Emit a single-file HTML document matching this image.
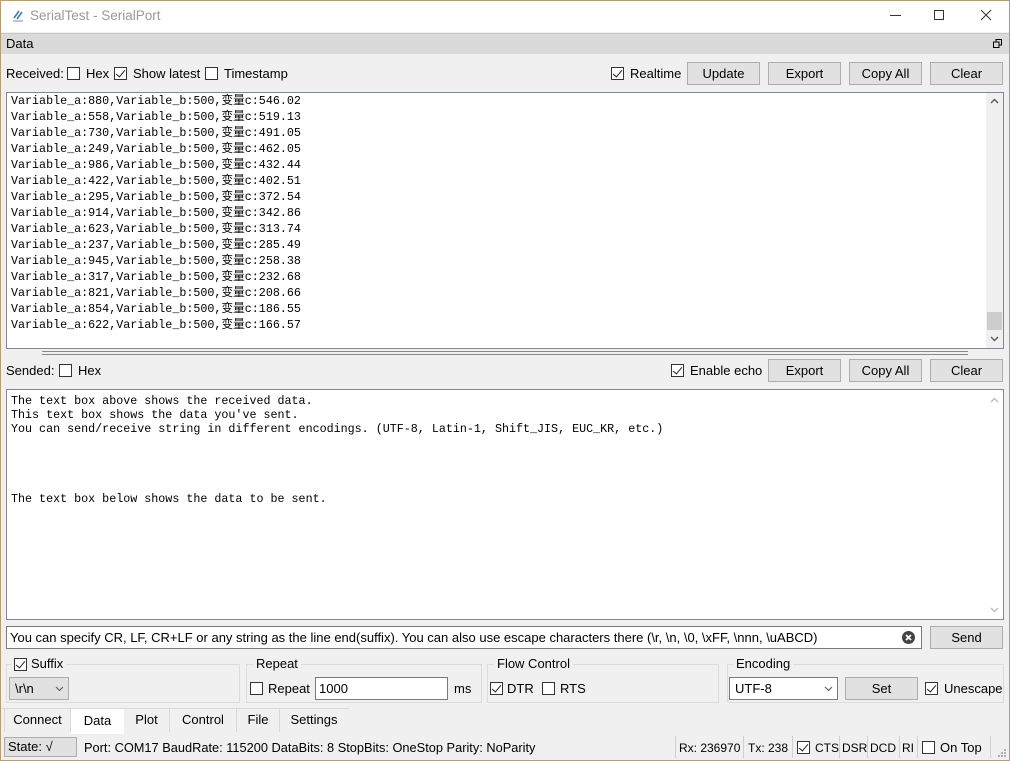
<!DOCTYPE html>
<html><head><meta charset="utf-8"><style>
*{box-sizing:border-box;margin:0;padding:0}
body{width:1010px;height:761px;overflow:hidden;background:#f0f0f0;font-family:"Liberation Sans","Noto Sans CJK SC",sans-serif;font-size:13px;color:#000;position:relative}
.a{position:absolute;white-space:nowrap}
.btn{position:absolute;height:23px;background:#e1e1e1;border:1px solid #adadad;text-align:center;line-height:21px}
.cb{position:absolute;width:13px;height:13px;border:1px solid #333;background:#fff}
.cb.c::after{content:"";position:absolute;left:3px;top:0px;width:4px;height:8px;border-right:1.3px solid #222;border-bottom:1.3px solid #222;transform:rotate(40deg)}
.box{position:absolute;background:#fff;border:1px solid #828790}
.mono{font-family:"Liberation Mono","Noto Sans CJK SC",monospace;font-size:11.7px;line-height:16px}
.grp{position:absolute;border:1px solid #dcdcdc;}
.gt{position:absolute;background:#f0f0f0;padding:0 3px}
.combo{position:absolute;border:1px solid #adadad;height:23px;line-height:21px;padding-left:5px}
.s{font-size:12px}
</style></head><body>
<div class="a" style="left:0;top:0;width:1010px;height:761px;border:1px solid #b59e73;z-index:9;pointer-events:none"></div>
<!-- title -->
<div class="a" style="left:0;top:0;width:1010px;height:32px;background:#fff"></div>
<svg class="a" style="left:11px;top:8px" width="14" height="14" viewBox="0 0 14 14"><path d="M3 10 L8 3 M6 11 L11 4" stroke="#3a7fc4" stroke-width="1.6" fill="none"/><path d="M2 13h10" stroke="#888" stroke-width="1"/></svg>
<div class="a" style="left:30px;top:8px;color:#999;font-size:13.5px">SerialTest - SerialPort</div>
<div class="a" style="left:890px;top:15px;width:11px;height:1px;background:#333"></div>
<div class="a" style="left:934px;top:10px;width:10px;height:10px;border:1px solid #333"></div>
<svg class="a" style="left:980px;top:9px" width="12" height="12"><path d="M1 1L11 11M11 1L1 11" stroke="#333" stroke-width="1"/></svg>
<!-- dock header -->
<div class="a" style="left:1px;top:33px;width:1008px;height:21px;background:#dadada;border-top:1px solid #c8c8c8"></div>
<div class="a" style="left:6px;top:36px">Data</div>
<svg class="a" style="left:993px;top:39px" width="9" height="9"><rect x="0.5" y="3" width="5.5" height="5.5" fill="none" stroke="#000"/><path d="M3 3V0.5H8.5V6H6" fill="none" stroke="#000"/></svg>
<!-- received row -->
<div class="a" style="left:6px;top:66px">Received:</div>
<div class="cb" style="left:67px;top:67px"></div><div class="a" style="left:86px;top:66px">Hex</div>
<div class="cb c" style="left:114px;top:67px"></div><div class="a" style="left:133px;top:66px">Show latest</div>
<div class="cb" style="left:205px;top:67px"></div><div class="a" style="left:224px;top:66px">Timestamp</div>
<div class="cb c" style="left:611px;top:67px"></div><div class="a" style="left:630px;top:66px">Realtime</div>
<div class="btn" style="left:687px;top:62px;width:73px">Update</div>
<div class="btn" style="left:768px;top:62px;width:73px">Export</div>
<div class="btn" style="left:849px;top:62px;width:73px">Copy All</div>
<div class="btn" style="left:930px;top:62px;width:73px">Clear</div>
<div class="box mono" style="left:6px;top:92px;width:998px;height:257px;padding:0 0 0 4px">
<div style="position:absolute;left:4px;top:0">Variable_a:880,Variable_b:500,变量c:546.02<br>Variable_a:558,Variable_b:500,变量c:519.13<br>Variable_a:730,Variable_b:500,变量c:491.05<br>Variable_a:249,Variable_b:500,变量c:462.05<br>Variable_a:986,Variable_b:500,变量c:432.44<br>Variable_a:422,Variable_b:500,变量c:402.51<br>Variable_a:295,Variable_b:500,变量c:372.54<br>Variable_a:914,Variable_b:500,变量c:342.86<br>Variable_a:623,Variable_b:500,变量c:313.74<br>Variable_a:237,Variable_b:500,变量c:285.49<br>Variable_a:945,Variable_b:500,变量c:258.38<br>Variable_a:317,Variable_b:500,变量c:232.68<br>Variable_a:821,Variable_b:500,变量c:208.66<br>Variable_a:854,Variable_b:500,变量c:186.55<br>Variable_a:622,Variable_b:500,变量c:166.57</div>
<div style="position:absolute;right:0;top:0;width:17px;height:255px;background:#f0f0f0"></div>
<div style="position:absolute;right:1px;top:219px;width:15px;height:18px;background:#cdcdcd"></div>
<svg style="position:absolute;right:4px;top:5px" width="9" height="6"><path d="M1 5L4.5 1.5L8 5" stroke="#606060" stroke-width="1.5" fill="none"/></svg>
<svg style="position:absolute;right:4px;top:243px" width="9" height="6"><path d="M1 1L4.5 4.5L8 1" stroke="#606060" stroke-width="1.5" fill="none"/></svg>
</div>
<div class="a" style="left:42px;top:351px;width:926px;height:4px;border-top:1px solid #888;border-bottom:1px solid #888"></div>
<!-- sended row -->
<div class="a" style="left:6px;top:363px">Sended:</div>
<div class="cb" style="left:59px;top:364px"></div><div class="a" style="left:78px;top:363px">Hex</div>
<div class="cb c" style="left:671px;top:364px"></div><div class="a" style="left:690px;top:363px">Enable echo</div>
<div class="btn" style="left:768px;top:359px;width:73px">Export</div>
<div class="btn" style="left:849px;top:359px;width:73px">Copy All</div>
<div class="btn" style="left:930px;top:359px;width:73px">Clear</div>
<div class="box mono" style="left:6px;top:389px;width:998px;height:231px">
<div style="position:absolute;left:4px;top:4px;line-height:14px">The text box above shows the received data.<br>This text box shows the data you've sent.<br>You can send/receive string in different encodings. (UTF-8, Latin-1, Shift_JIS, EUC_KR, etc.)<br><br><br><br><br>The text box below shows the data to be sent.</div>
<svg style="position:absolute;right:4px;top:7px" width="9" height="6"><path d="M1 5L4.5 1.5L8 5" stroke="#c0c0c0" stroke-width="1.5" fill="none"/></svg>
<svg style="position:absolute;right:4px;top:217px" width="9" height="6"><path d="M1 1L4.5 4.5L8 1" stroke="#c0c0c0" stroke-width="1.5" fill="none"/></svg>
</div>
<!-- input -->
<div class="box" style="left:6px;top:626px;width:916px;height:23px;border-color:#7a7a7a"><div class="a" style="left:3px;top:3px">You can specify CR, LF, CR+LF or any string as the line end(suffix). You can also use escape characters there (\r, \n, \0, \xFF, \nnn, \uABCD)</div>
<svg style="position:absolute;left:895px;top:4px" width="13" height="13"><circle cx="6.5" cy="6.5" r="6.5" fill="#444"/><path d="M4 4L9 9M9 4L4 9" stroke="#fff" stroke-width="1.8"/></svg></div>
<div class="btn" style="left:930px;top:626px;width:73px">Send</div>
<!-- groups -->
<div class="grp" style="left:6px;top:664px;width:234px;height:39px"></div>
<div class="gt" style="left:11px;top:656px;padding-left:20px">Suffix</div>
<div class="cb c" style="left:14px;top:658px"></div>
<div class="combo" style="left:9px;top:677px;width:60px;background:#e1e1e1">\r\n</div>
<svg class="a" style="left:55px;top:686px" width="9" height="6"><path d="M1 1L4.5 4.5L8 1" stroke="#555" fill="none"/></svg>
<div class="grp" style="left:246px;top:664px;width:236px;height:39px"></div>
<div class="gt" style="left:253px;top:656px">Repeat</div>
<div class="cb" style="left:250px;top:682px"></div><div class="a" style="left:268px;top:681px">Repeat</div>
<div class="box" style="left:315px;top:677px;width:133px;height:23px;border-color:#7a7a7a"><div class="a" style="left:3px;top:3px">1000</div></div>
<div class="a" style="left:454px;top:681px">ms</div>
<div class="grp" style="left:487px;top:664px;width:232px;height:39px"></div>
<div class="gt" style="left:494px;top:656px">Flow Control</div>
<div class="cb c" style="left:490px;top:682px"></div><div class="a" style="left:507px;top:681px">DTR</div>
<div class="cb" style="left:542px;top:682px"></div><div class="a" style="left:560px;top:681px">RTS</div>
<div class="grp" style="left:727px;top:664px;width:277px;height:39px"></div>
<div class="gt" style="left:733px;top:656px">Encoding</div>
<div class="combo" style="left:729px;top:677px;width:109px;background:#fff;border-color:#7a7a7a">UTF-8</div>
<svg class="a" style="left:824px;top:686px" width="9" height="6"><path d="M1 1L4.5 4.5L8 1" stroke="#555" fill="none"/></svg>
<div class="btn" style="left:845px;top:677px;width:73px">Set</div>
<div class="cb c" style="left:925px;top:682px"></div><div class="a" style="left:944px;top:681px">Unescape</div>
<!-- tabs -->
<div class="a" style="left:1px;top:708px;width:348px;height:1px;background:#d9d9d9"></div>
<div class="a" style="left:4px;top:709px;width:67px;height:23px;border-right:1px solid #d9d9d9;border-left:1px solid #d9d9d9;text-align:center;line-height:22px">Connect</div>
<div class="a" style="left:71px;top:709px;width:53px;height:25px;background:#fff;text-align:center;line-height:24px">Data</div>
<div class="a" style="left:124px;top:709px;width:46px;height:23px;border-right:1px solid #d9d9d9;text-align:center;line-height:22px">Plot</div>
<div class="a" style="left:170px;top:709px;width:67px;height:23px;border-right:1px solid #d9d9d9;text-align:center;line-height:22px">Control</div>
<div class="a" style="left:237px;top:709px;width:43px;height:23px;border-right:1px solid #d9d9d9;text-align:center;line-height:22px">File</div>
<div class="a" style="left:280px;top:709px;width:68px;height:23px;text-align:center;line-height:22px">Settings</div>
<!-- status -->
<div class="a" style="left:4px;top:737px;width:73px;height:20px;background:#e1e1e1;border:1px solid #adadad;padding-left:3px;line-height:18px">State: √</div>
<div class="a" style="left:84px;top:740px;font-size:12.8px">Port: COM17 BaudRate: 115200 DataBits: 8 StopBits: OneStop Parity: NoParity</div>
<div class="a" style="left:675px;top:736px;width:1px;height:22px;background:#d0d0d0"></div>
<div class="a s" style="left:679px;top:741px">Rx: 236970</div>
<div class="a" style="left:743px;top:736px;width:1px;height:22px;background:#d0d0d0"></div>
<div class="a s" style="left:748px;top:741px">Tx: 238</div>
<div class="a" style="left:792px;top:736px;width:1px;height:22px;background:#d0d0d0"></div>
<div class="cb c" style="left:797px;top:741px"></div>
<div class="a s" style="left:815px;top:741px">CTS</div>
<div class="a" style="left:839px;top:736px;width:1px;height:22px;background:#d0d0d0"></div>
<div class="a s" style="left:842px;top:741px">DSR</div>
<div class="a" style="left:867px;top:736px;width:1px;height:22px;background:#d0d0d0"></div>
<div class="a s" style="left:870px;top:741px">DCD</div>
<div class="a" style="left:899px;top:736px;width:1px;height:22px;background:#d0d0d0"></div>
<div class="a s" style="left:902px;top:741px">RI</div>
<div class="a" style="left:917px;top:736px;width:1px;height:22px;background:#d0d0d0"></div>
<div class="cb" style="left:922px;top:741px"></div>
<div class="a" style="left:940px;top:740px">On Top</div>
<div class="a" style="left:990px;top:736px;width:1px;height:22px;background:#d0d0d0"></div>
<svg class="a" style="left:997px;top:748px" width="9" height="9"><g fill="#b0b0b0"><rect x="7" y="1" width="2" height="2"/><rect x="4" y="4" width="2" height="2"/><rect x="7" y="4" width="2" height="2"/><rect x="1" y="7" width="2" height="2"/><rect x="4" y="7" width="2" height="2"/><rect x="7" y="7" width="2" height="2"/></g></svg>
</body></html>
